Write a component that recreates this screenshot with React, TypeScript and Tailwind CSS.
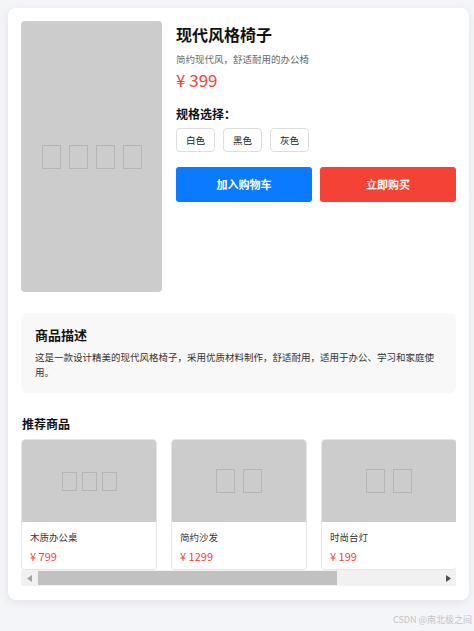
import React from 'react'

const font = { fontFamily: '"Noto Sans CJK SC", "Noto Sans", sans-serif' }

const specs = ['白色', '黑色', '灰色']

const related = [
  { name: '木质办公桌', price: '¥ 799', boxes: 3, small: true },
  { name: '简约沙发', price: '¥ 1299', boxes: 2, small: false },
  { name: '时尚台灯', price: '¥ 199', boxes: 2, small: false },
]

function Tofu({ count, small }: { count: number; small?: boolean }) {
  return (
    <div className={small ? 'flex gap-[5px]' : 'flex gap-[8px]'}>
      {Array.from({ length: count }).map((_, i) => (
        <span
          key={i}
          className={
            small
              ? 'block h-[19px] w-[15px] border border-[#b5b5b5]'
              : 'block h-[24px] w-[19px] border border-[#b5b5b5]'
          }
        />
      ))}
    </div>
  )
}

function ScrollBar() {
  return (
    <div className="flex h-[16px] items-stretch bg-[#f1f1f1]">
      <div className="flex w-[17px] items-center justify-center">
        <svg width="5" height="7" viewBox="0 0 5 7">
          <path d="M5 0 L0 3.5 L5 7 Z" fill="#a3a3a3" />
        </svg>
      </div>
      <div className="flex flex-1 items-center">
        <div className="h-[14px] w-[299px] bg-[#c1c1c1]" />
      </div>
      <div className="flex w-[16px] items-center justify-center">
        <svg width="5" height="7" viewBox="0 0 5 7">
          <path d="M0 0 L5 3.5 L0 7 Z" fill="#505050" />
        </svg>
      </div>
    </div>
  )
}

export default function App() {
  return (
    <div className="min-h-[631px] bg-[#f4f5f8] pt-2 pb-4" style={font}>
      <div className="ml-2 mr-[5px] rounded-lg bg-white p-[13px] pb-[14px] shadow-[0_2px_10px_rgba(0,0,0,0.08)]">
        <div className="flex gap-[14px]">
          <div className="flex h-[271px] w-[141px] shrink-0 items-center justify-center rounded bg-[#cccccc]">
            <Tofu count={4} />
          </div>
          <div className="flex flex-1 flex-col">
            <h1 className="mt-[2px] text-[16px] font-bold leading-[22px] text-[#111]">现代风格椅子</h1>
            <p className="mt-[7px] text-[9.5px] leading-[14px] text-[#666]">简约现代风，舒适耐用的办公椅</p>
            <div className="mt-[3px] text-[17px] leading-[22px] text-[#f0433a]">¥ 399</div>
            <div className="mt-[15px] text-[12px] font-bold leading-[16px] text-[#111]">规格选择：</div>
            <div className="mt-[6px] flex gap-[8px]">
              {specs.map((s) => (
                <button
                  key={s}
                  className="h-[24px] w-[39px] rounded-sm border border-[#dddddd] bg-white text-[9.5px] text-[#222]"
                >
                  {s}
                </button>
              ))}
            </div>
            <div className="mt-[15px] flex gap-[8px]">
              <button className="h-[35px] flex-1 rounded-[3px] bg-[#0a7bff] text-[11px] font-bold text-white">加入购物车</button>
              <button className="h-[35px] flex-1 rounded-[3px] bg-[#f44336] text-[11px] font-bold text-white">立即购买</button>
            </div>
          </div>
        </div>

        <div className="mt-[21px] rounded-md bg-[#f8f8f8] px-[14px] pt-[13px] pb-[13px]">
          <h2 className="text-[13px] font-bold leading-[18px] text-[#111]">商品描述</h2>
          <p className="mt-[6px] text-[9.5px] leading-[15px] text-[#333]">
            这是一款设计精美的现代风格椅子，采用优质材料制作，舒适耐用，适用于办公、学习和家庭使用。
          </p>
        </div>

        <h2 className="mt-[23px] pl-px text-[12px] font-bold leading-[16px] text-[#111]">推荐商品</h2>
        <div className="mt-[7px] flex gap-[14px] overflow-hidden">
          {related.map((r) => (
            <div key={r.name} className="w-[136px] shrink-0 overflow-hidden rounded border border-[#e6e6e6] bg-white">
              <div className="flex h-[82px] items-center justify-center bg-[#cccccc]">
                <Tofu count={r.boxes} small={r.small} />
              </div>
              <div className="px-[8px] pt-[8px] pb-[6px]">
                <div className="text-[9.5px] leading-[14px] text-[#333]">{r.name}</div>
                <div className="mt-[5px] text-[11px] leading-[14px] text-[#f0433a]">{r.price}</div>
              </div>
            </div>
          ))}
        </div>
        <ScrollBar />
      </div>
      <div className="mt-[13px] pr-[2px] text-right text-[9px] text-[#c4c4c4]">CSDN @南北极之间</div>
    </div>
  )
}
